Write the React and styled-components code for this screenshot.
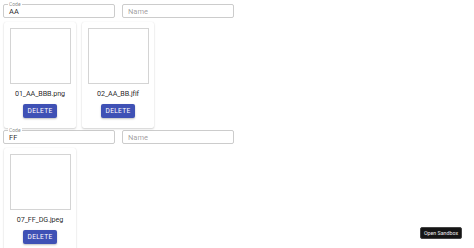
import React from "react";
import styled, { createGlobalStyle } from "styled-components";

const
	Global = createGlobalStyle`
		html, body {
			margin: 0;
			padding: 0;
			background: #fff;
			font-family: Roboto, "Liberation Sans", sans-serif;
			color: rgba(0, 0, 0, .87);
		}
	`,
	Page = styled.div`
		display: flex;
		flex-direction: column;
		padding: 3px 0 0 3px;
		width: 474px;
		height: 248px;
		box-sizing: border-box;
		overflow: hidden;
		position: relative;
	`,
	Group = styled.div`
		display: flex;
		flex-direction: column;
		gap: 4px;
		margin-bottom: 1px;
	`,
	FieldRow = styled.div`
		display: flex;
		gap: 7px;
		padding-top: 1px;
	`,
	Field = styled.div`
		position: relative;
		width: 112px;
		height: 14px;
		box-sizing: border-box;
		border: 1px solid rgba(0, 0, 0, .2);
		border-radius: 2px;
		display: flex;
		align-items: center;
		padding-left: 5px;
		font-size: 7.5px;
		color: ${p => p.$empty ? "rgba(0, 0, 0, .4)" : "rgba(0, 0, 0, .87)"};
	`,
	FieldLabel = styled.span`
		position: absolute;
		top: -4px;
		left: 4px;
		padding: 0 1px;
		background: #fff;
		font-size: 5px;
		line-height: 6px;
		color: rgba(0, 0, 0, .5);
	`,
	Cards = styled.div`
		display: flex;
		gap: 6px;
		padding-left: 1px;
	`,
	Card = styled.div`
		width: 72px;
		box-sizing: border-box;
		padding: 6px 5px 10px;
		background: #fff;
		border-radius: 2px;
		box-shadow: 0 1px 2px rgba(0, 0, 0, .18), 0 0 1px rgba(0, 0, 0, .1);
		display: flex;
		flex-direction: column;
		align-items: center;
	`,
	Preview = styled.div`
		width: 61px;
		height: 56px;
		box-sizing: border-box;
		border: 1px solid #d4d4d4;
	`,
	FileName = styled.div`
		margin-top: 5px;
		font-size: 7.2px;
		line-height: 9px;
		letter-spacing: -0.1px;
	`,
	DeleteButton = styled.button`
		margin-top: 6px;
		width: 34px;
		height: 14px;
		border: none;
		border-radius: 2px;
		background: #3f51b5;
		color: #fff;
		font-family: Roboto, "Liberation Sans", sans-serif;
		font-size: 6.6px;
		font-weight: 400;
		letter-spacing: 0.3px;
		padding: 0;
		box-shadow: 0 1px 2px rgba(0, 0, 0, .25);
	`,
	SandboxButton = styled.div`
		position: absolute;
		right: 12px;
		bottom: 9px;
		width: 42px;
		height: 12px;
		box-sizing: border-box;
		background: #151515;
		border: 1px solid #444;
		border-radius: 2px;
		color: #eee;
		font-size: 5.3px;
		display: flex;
		align-items: center;
		justify-content: center;
	`;

const groups = [
	{ code: "AA", files: [ "01_AA_BBB.png", "02_AA_BB.jfif" ] },
	{ code: "FF", files: [ "07_FF_DG.jpeg" ] }
];

const App = () => (
	<Page>
		<Global />
		{groups.map( group =>
			<Group key={group.code}>
				<FieldRow>
					<Field>
						<FieldLabel>Code</FieldLabel>
						{group.code}
					</Field>
					<Field $empty>Name</Field>
				</FieldRow>
				<Cards>
					{group.files.map( file =>
						<Card key={file}>
							<Preview />
							<FileName>{file}</FileName>
							<DeleteButton>DELETE</DeleteButton>
						</Card>
					)}
				</Cards>
			</Group>
		)}
		<SandboxButton>Open Sandbox</SandboxButton>
	</Page>
);

export default App;
